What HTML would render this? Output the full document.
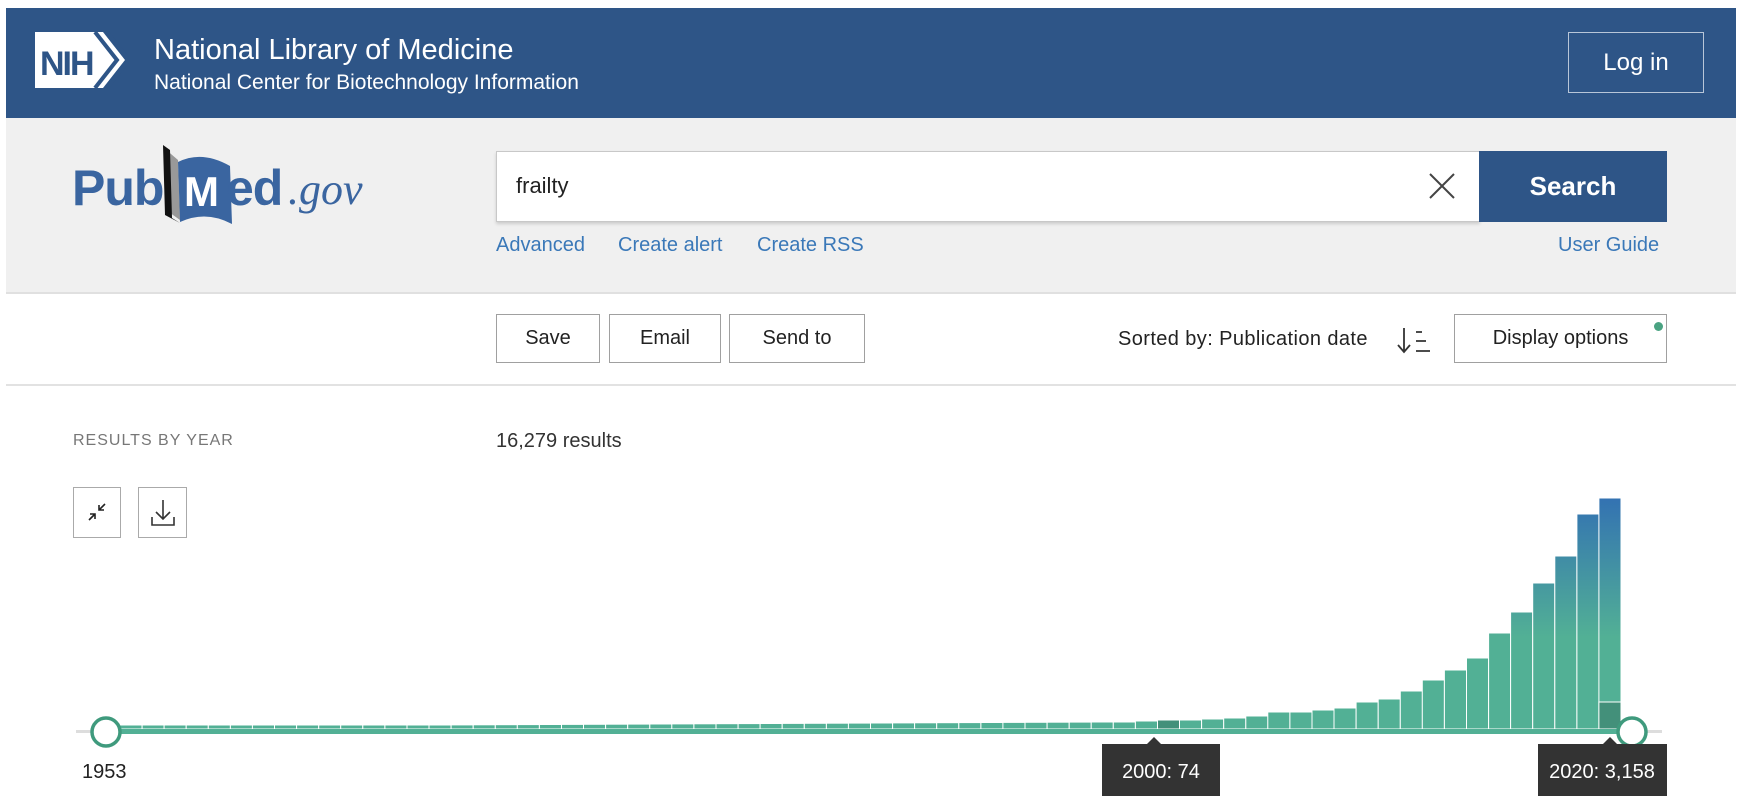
<!DOCTYPE html>
<html><head><meta charset="utf-8"><style>
*{margin:0;padding:0;box-sizing:border-box}
body{width:1742px;height:808px;background:#fff;position:relative;overflow:hidden;font-family:"Liberation Sans",sans-serif}
.a{position:absolute}
.btn{position:absolute;border:1px solid #a0a0a0;background:#fff;color:#222;font-size:20px;display:flex;align-items:center;justify-content:center}
.lnk{position:absolute;color:#3a78b8;font-size:20px;top:234px}
</style></head><body>
<div class="a" style="left:6px;top:8px;width:1730px;height:110px;background:#2e5587"></div>
<svg class="a" style="left:33px;top:30px" width="96" height="60" viewBox="0 0 96 60">
<path d="M2 2 H70 L92 30 L70 58 H2 Z" fill="#fff"/>
<path d="M62 2 L84 30 L62 58" fill="none" stroke="#2e5587" stroke-width="4"/>
<path d="M74 2 L96 30 L74 58" fill="none" stroke="#2e5587" stroke-width="4"/>
<text x="7" y="45" font-family="Liberation Sans" font-weight="bold" font-size="34" fill="#2e5587" letter-spacing="-2">NIH</text>
</svg>
<div class="a" style="left:154px;top:34px;color:#fff;font-size:29px">National Library of Medicine</div>
<div class="a" style="left:154px;top:71px;color:#fff;font-size:21px">National Center for Biotechnology Information</div>
<div class="a" style="left:1568px;top:32px;width:136px;height:61px;border:1px solid #b8c6d8;color:#fff;font-size:24px;display:flex;align-items:center;justify-content:center">Log in</div>

<div class="a" style="left:6px;top:118px;width:1730px;height:176px;background:#f0f0f0;border-bottom:2px solid #e0e0e0"></div>
<svg class="a" style="left:70px;top:140px" width="300" height="90" viewBox="0 0 300 90">
<text x="2" y="65" font-family="Liberation Sans" font-weight="bold" font-size="50" fill="#3a65a0" letter-spacing="-1">Pub</text>
<path d="M94 8 L108 20 L110 80 L96 70 Z" fill="#999"/>
<path d="M93 5 L100 10 L102 78 L110 83 L95 75 Z" fill="#111"/>
<path d="M108 22 Q132 10 160 26 L162 84 Q136 70 110 82 Z" fill="#3a65a0"/>
<text x="114" y="66" font-family="Liberation Sans" font-weight="bold" font-size="42" fill="#fff">M</text>
<text x="156" y="65" font-family="Liberation Sans" font-weight="bold" font-size="50" fill="#3a65a0" letter-spacing="-1">ed</text>
<text x="218" y="64" font-family="Liberation Serif" font-style="italic" font-size="44" fill="#3a65a0">.gov</text>
</svg>
<div class="a" style="left:496px;top:151px;width:984px;height:71px;background:#fff;border:1px solid #c8c8c8;box-shadow:0 2px 3px rgba(0,0,0,.15)"></div>
<div class="a" style="left:516px;top:173px;font-size:22px;color:#222">frailty</div>
<svg class="a" style="left:1428px;top:172px" width="28" height="28"><path d="M2 2 L26 26 M26 2 L2 26" stroke="#444" stroke-width="2"/></svg>
<div class="a" style="left:1479px;top:151px;width:188px;height:71px;background:#2e5587;color:#fff;font-weight:bold;font-size:26px;display:flex;align-items:center;justify-content:center">Search</div>
<div class="lnk" style="left:496px">Advanced</div>
<div class="lnk" style="left:618px">Create alert</div>
<div class="lnk" style="left:757px">Create RSS</div>
<div class="lnk" style="left:1558px">User Guide</div>

<div class="btn" style="left:496px;top:314px;width:104px;height:49px">Save</div>
<div class="btn" style="left:609px;top:314px;width:112px;height:49px">Email</div>
<div class="btn" style="left:729px;top:314px;width:136px;height:49px">Send to</div>
<div class="a" style="left:1118px;top:328px;font-size:20px;color:#222;letter-spacing:0.4px">Sorted by: Publication date</div>
<svg class="a" style="left:1396px;top:326px" width="34" height="30"><path d="M8 2 V26 M2 19 L8 26 L14 19 M20 6 H26 M20 15 H30 M20 25 H34" stroke="#333" stroke-width="1.8" fill="none"/></svg>
<div class="btn" style="left:1454px;top:314px;width:213px;height:49px">Display options</div>
<div class="a" style="left:1654px;top:322px;width:9px;height:9px;border-radius:50%;background:#4aa382"></div>
<div class="a" style="left:6px;top:384px;width:1730px;height:2px;background:#e2e2e2"></div>

<div class="a" style="left:73px;top:432px;font-size:16px;color:#777;letter-spacing:1px">RESULTS BY YEAR</div>
<div class="a" style="left:496px;top:430px;font-size:20px;color:#333">16,279 results</div>
<div class="a" style="left:73px;top:487px;width:48px;height:51px;border:1px solid #aaa"></div>
<svg class="a" style="left:86px;top:501px" width="22" height="22"><path d="M3 19 L9 13 M4 13 H9 V18 M19 3 L13 9 M13 4 V9 H18" stroke="#222" stroke-width="1.6" fill="none"/></svg>
<div class="a" style="left:138px;top:487px;width:49px;height:51px;border:1px solid #aaa"></div>
<svg class="a" style="left:149px;top:498px" width="28" height="30"><path d="M14 2 V21 M7 14 L14 21 L21 14 M3 19 V27 H25 V19" stroke="#333" stroke-width="1.6" fill="none"/></svg>

<svg class="a" style="left:0;top:480px" width="1742" height="328" viewBox="0 480 1742 328">
<defs><linearGradient id="g" gradientUnits="userSpaceOnUse" x1="0" y1="498" x2="0" y2="730"><stop offset="0" stop-color="#3372b2"/><stop offset="0.6" stop-color="#52b095"/><stop offset="1" stop-color="#52b095"/></linearGradient></defs>
<g id="bars" fill="url(#g)" stroke="#fff" stroke-width="1"></g>
<rect x="76" y="730" width="16" height="3" fill="#ddd"/>
<rect x="1646" y="730" width="16" height="3" fill="#ddd"/>
<rect x="106" y="729" width="1526" height="5" fill="#52b095"/>
<circle cx="106" cy="732" r="14" fill="#fff" stroke="#3f9a7d" stroke-width="3.5"/>
<circle cx="1632" cy="732" r="14" fill="#fff" stroke="#3f9a7d" stroke-width="3.5"/>
<text x="82" y="778" font-family="Liberation Sans" font-size="20" fill="#222">1953</text>
<path d="M1154 737 L1161 744 H1147 Z" fill="#333"/>
<rect x="1102" y="744" width="118" height="52" fill="#333"/>
<text x="1161" y="778" text-anchor="middle" font-family="Liberation Sans" font-size="20" fill="#fff">2000: 74</text>
<path d="M1610 737 L1617 744 H1603 Z" fill="#333"/>
<rect x="1538" y="744" width="129" height="52" fill="#333"/>
<text x="1602" y="778" text-anchor="middle" font-family="Liberation Sans" font-size="20" fill="#fff">2020: 3,158</text>
</svg>
<script>
var h=[231,215,173,146,117,96,71,59,49,38,30,27,21,19,17,17,13,11,10,9,9,8,7,7];
var g=document.getElementById('bars'),s='';
var n=68,x0=120,w=(1621-x0)/n;
for(var i=0;i<n;i++){var yr=1953+i,k=2020-yr,hh=k<h.length?h[k]:Math.max(4,7-(k-23)*0.1);
var x=x0+i*w;s+='<rect x="'+x.toFixed(1)+'" y="'+(729-hh).toFixed(1)+'" width="'+w.toFixed(1)+'" height="'+hh.toFixed(1)+'"/>';
if(yr==2000)s+='<rect x="'+x.toFixed(1)+'" y="'+(729-hh)+'" width="'+w.toFixed(1)+'" height="'+hh+'" fill="#43907a"/>';
if(yr==2020)s+='<rect x="'+x.toFixed(1)+'" y="702" width="'+w.toFixed(1)+'" height="27" fill="#43907a"/>';}
g.innerHTML=s;
</script>
</body></html>
